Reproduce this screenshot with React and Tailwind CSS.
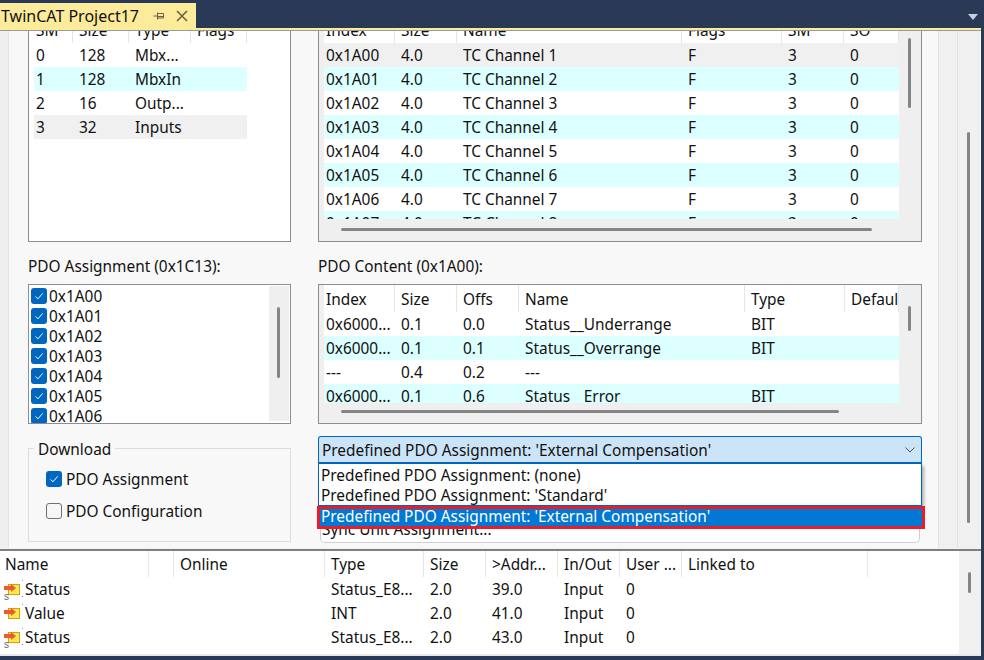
import React from "react";

const leftRows = [
  ["0", "128", "Mbx...", "", ""],
  ["1", "128", "MbxIn", "", "bg-[#dcffff]"],
  ["2", "16", "Outp...", "", ""],
  ["3", "32", "Inputs", "", "bg-[#f0f0f0]"],
];

const channelRows = [1, 2, 3, 4, 5, 6, 7, 8].map((n, i) => [
  "0x1A0" + (n - 1),
  "4.0",
  "TC Channel " + n,
  "F",
  "3",
  "0",
  i === 0 ? "bg-[#f0f0f0]" : i % 2 === 1 ? "bg-[#dcffff]" : "",
]);

const contentRows = [
  ["0x6000...", "0.1", "0.0", "Status__Underrange", "BIT", "", ""],
  ["0x6000...", "0.1", "0.1", "Status__Overrange", "BIT", "", "bg-[#dcffff]"],
  ["---", "0.4", "0.2", "---", "", "", ""],
  ["0x6000...", "0.1", "0.6", "Status__Error", "BIT", "", "bg-[#dcffff]"],
];

const varRows = [
  ["Status", "", "", "Status_E8...", "2.0", "39.0", "Input", "0", "", true],
  ["Value", "", "", "INT", "2.0", "41.0", "Input", "0", "", false],
  ["Status", "", "", "Status_E8...", "2.0", "43.0", "Input", "0", "", true],
];

const GRID_LEFT = "grid-cols-[39px_56px_62px_56px]";
const GRID_CHANNEL = "grid-cols-[71px_62px_225px_100px_62px_55px]";
const GRID_CONTENT = "grid-cols-[71px_62px_62px_226px_100px_54px]";
const GRID_VARS = "grid-cols-[149px_25px_151px_99px_62px_72px_62px_62px_186px]";

const HeaderCell = ({ label, first }) => (
  <div className={`h-full border-r border-[#e5e5e5] whitespace-nowrap overflow-hidden ${first ? "pl-[2px]" : "pl-[6px]"}`}>
    {label}
  </div>
);

const Row = ({ cells, grid, tint }) => (
  <div className={`grid h-[24px] items-start leading-[26px] ${grid} ${tint}`}>
    {cells.map((c, i) => (
      <div key={i} className={`h-[24px] whitespace-nowrap ${i === 0 ? "pl-[2px]" : "pl-[6px]"}`}>
        {c}
      </div>
    ))}
  </div>
);

const Tick = () => (
  <div className="w-[16px] h-[16px] rounded-[3px] bg-[#0067c0] flex items-center justify-center shrink-0">
    <svg width="10" height="10" viewBox="0 0 10 10" fill="none">
      <path d="M1.5 5.4 L4 7.8 L8.6 2.4" stroke="white" strokeWidth="1" />
    </svg>
  </div>
);

const VarIcon = ({ sub }) => (
  <svg width="22" height="24" viewBox="0 0 22 24" className="shrink-0">
    <rect x="7.5" y="7.5" width="11" height="10" fill="#ffe84a" stroke="#c9a21c" />
    <path d="M3 9 H10 V7 L15 11 L10 15 V13 H3 Z" fill="#f0582a" />
    <rect x="21" y="3" width="1" height="1" fill="#22d8e0" />
    {sub && <rect x="21" y="19" width="1" height="1" fill="#777777" />}
    {sub && (
      <text x="3" y="23" fontSize="10" fill="#666666" fontFamily="Liberation Sans, sans-serif">
        s
      </text>
    )}
  </svg>
);

export default function App() {
  return (
    <div className="w-[984px] h-[660px] overflow-hidden flex flex-col bg-[#2a3a56] text-[15.4px] text-[#111111] font-['Noto_Sans','Open_Sans',sans-serif]">
      {/* tab strip */}
      <div className="h-[28px] shrink-0 flex items-end justify-between">
        <div className="w-[196px] h-[25px] bg-[#fdeb9c] flex items-center pl-[1px]">
          <span className="w-[150px] text-[16px] whitespace-nowrap">TwinCAT Project17</span>
          <svg width="12" height="12" viewBox="0 0 12 12" className="ml-[2px]" fill="none" stroke="#6b6240">
            <path d="M0.5 6 H4 M4.5 2.5 V9.5 M4.5 3.5 H10.5 V8 H4.5 M4.5 6.5 H10.5" />
          </svg>
          <svg width="12" height="12" viewBox="0 0 12 12" className="ml-[11px]" fill="none" stroke="#6b6240" strokeWidth="1.6">
            <path d="M1 1 L11 11 M11 1 L1 11" />
          </svg>
        </div>
        <svg width="10" height="6" viewBox="0 0 10 6" className="mr-[6px] mb-[8px]">
          <path d="M0 0 H10 L5 6 Z" fill="#c8d0e0" />
        </svg>
      </div>

      <div className="w-[981px] shrink-0 h-[2px] bg-[#fdeb9c]" />
      <div className="w-[981px] shrink-0 h-px bg-[#9a9a9a]" />

      {/* upper pane */}
      <div className="w-[981px] h-[517px] shrink-0 flex bg-[#f8f8f8] overflow-hidden">
        <div className="w-[9px] shrink-0 bg-[#efefef] border-r border-[#e4e4e4]" />

        <div className="w-[930px] shrink-0 pl-[19px] border-r border-[#e0e0e0]">
          <div className="grid grid-cols-[263px_604px] gap-x-[27px]">
            {/* sync manager list */}
            <div className="h-[211px] border border-t-0 border-[#8a8d96] bg-white overflow-hidden pl-[5px]">
              <div className="w-[213px]">
                <div className={`grid h-[24px] -mt-[12px] leading-[23px] ${GRID_LEFT}`}>
                  {["SM", "Size", "Type", "Flags"].map((h, i) => (
                    <HeaderCell key={h} label={h} first={i === 0} />
                  ))}
                </div>
                {leftRows.map((r) => (
                  <Row key={r[0]} cells={r.slice(0, 4)} grid={GRID_LEFT} tint={r[4]} />
                ))}
              </div>
            </div>

            {/* pdo list */}
            <div className="h-[211px] border border-t-0 border-[#8a8d96] bg-[#efefef] overflow-hidden flex flex-col">
              <div className="flex flex-1 min-h-0">
                <div className="w-[575px] ml-[5px] overflow-hidden bg-white">
                  <div className={`grid h-[24px] -mt-[12px] leading-[23px] ${GRID_CHANNEL}`}>
                    {["Index", "Size", "Name", "Flags", "SM", "SO"].map((h, i) => (
                      <HeaderCell key={h} label={h} first={i === 0} />
                    ))}
                  </div>
                  {channelRows.map((r) => (
                    <Row key={r[0]} cells={r.slice(0, 6)} grid={GRID_CHANNEL} tint={r[6]} />
                  ))}
                </div>
                <div className="pl-[9px] pt-[7px]">
                  <div className="w-[3px] h-[70px] rounded-[2px] bg-[#858585]" />
                </div>
              </div>
              <div className="h-[22px] shrink-0 pl-[22px] pt-[9px]">
                <div className="w-[531px] h-[3px] rounded-[2px] bg-[#858585]" />
              </div>
            </div>

            <div className="h-[42px] leading-[49px] whitespace-nowrap">PDO Assignment (0x1C13):</div>
            <div className="h-[42px] leading-[49px] whitespace-nowrap">PDO Content (0x1A00):</div>

            {/* pdo assignment checklist */}
            <div className="h-[140px] border border-[#8a8d96] bg-white overflow-hidden flex">
              <div className="w-[240px] h-[138px] overflow-hidden pl-[2px] pt-[1px]">
                {["0x1A00", "0x1A01", "0x1A02", "0x1A03", "0x1A04", "0x1A05", "0x1A06"].map((x) => (
                  <div key={x} className="flex items-center gap-[2px] h-[20px]">
                    <Tick />
                    <span className="pt-[2px]">{x}</span>
                  </div>
                ))}
              </div>
              <div className="w-[20px] h-[135px] mt-[1px] bg-[#efefef] pl-[8px] pt-[21px]">
                <div className="w-[3px] h-[71px] rounded-[2px] bg-[#858585]" />
              </div>
            </div>

            {/* pdo content */}
            <div className="h-[140px] border border-[#8a8d96] bg-[#efefef] overflow-hidden flex flex-col">
              <div className="flex h-[118px] shrink-0">
                <div className="w-[575px] ml-[5px] overflow-hidden bg-white">
                  <div className={`grid h-[27px] leading-[29px] ${GRID_CONTENT}`}>
                    {["Index", "Size", "Offs", "Name", "Type", "Default"].map((h, i) => (
                      <HeaderCell key={h} label={h} first={i === 0} />
                    ))}
                  </div>
                  {contentRows.map((r, i) => (
                    <Row key={i} cells={r.slice(0, 6)} grid={GRID_CONTENT} tint={r[6]} />
                  ))}
                </div>
                <div className="pl-[9px] pt-[21px]">
                  <div className="w-[3px] h-[25px] rounded-[2px] bg-[#858585]" />
                </div>
              </div>
              <div className="h-[20px] pl-[22px] pt-[7px]">
                <div className="w-[498px] h-[3px] rounded-[2px] bg-[#858585]" />
              </div>
            </div>

            {/* download group */}
            <fieldset className="mt-[16px] h-[102px] border border-[#dcdcdc]">
              <legend className="ml-[5px] px-[4px] h-[16px] leading-[20px]">Download</legend>
              <div className="flex items-center gap-[4px] h-[32px] mt-[7px] ml-[17px]">
                <Tick />
                <span className="pt-[2px]">PDO Assignment</span>
              </div>
              <div className="flex items-center gap-[4px] h-[32px] ml-[17px]">
                <div className="w-[16px] h-[16px] rounded-[3px] border border-[#707070] bg-[#f6f6f6] shrink-0" />
                <span className="pt-[2px]">PDO Configuration</span>
              </div>
            </fieldset>

            {/* predefined combo */}
            <div className="relative mt-[12px]">
              <div className="h-[28px] bg-[#cce4f7] border border-b-2 border-[#0067c0] rounded-t-[3px] flex items-center justify-between pl-[3px] pr-[5px]">
                <span className="whitespace-nowrap pt-[2px]">Predefined PDO Assignment: 'External Compensation'</span>
                <svg width="12" height="8" viewBox="0 0 12 8" fill="none" stroke="#555555">
                  <path d="M1.5 1.5 L6 6 L10.5 1.5" />
                </svg>
              </div>
              <div className="absolute left-0 top-[28px] w-[604px]">
                <div className="absolute left-[2px] top-[60px] w-[600px] h-[19px] bg-white border border-t-0 border-[#cfcfcf] rounded-b-[5px] overflow-hidden pl-[1px] leading-[12px] whitespace-nowrap">
                  Sync Unit Assignment...
                </div>
                <div className="relative h-[42px] bg-white border border-t-0 border-[#0067c0] shadow-[2px_2px_3px_rgba(0,0,0,0.3)] pl-[2px] pt-[2px] leading-[20px] whitespace-nowrap">
                  <div>Predefined PDO Assignment: (none)</div>
                  <div>Predefined PDO Assignment: 'Standard'</div>
                </div>
                <div className="relative -ml-[1px] w-[608px] h-[23px] border-[3px] border-[#e81c2b] bg-[#0078d4] text-white pl-px leading-[15px] whitespace-nowrap">
                  Predefined PDO Assignment: 'External Compensation'
                </div>
              </div>
            </div>
          </div>
        </div>

        <div className="w-[19px] shrink-0 bg-[#f0f0f0] border-r border-[#e0e0e0]" />
        <div className="w-[22px] shrink-0 bg-[#f0f0f0] pl-[9px] pt-[101px]">
          <div className="w-[3px] h-[391px] rounded-[2px] bg-[#858585]" />
        </div>
      </div>

      {/* variables pane */}
      <div className="w-[981px] shrink-0 h-px bg-[#f0f0f0]" />
      <div className="w-[981px] shrink-0 h-[2px] bg-[#7f7f7f]" />
      <div className="w-[981px] h-[105px] shrink-0 flex bg-white border-b-2 border-[#e8e8e8]">
        <div className="w-[959px] overflow-hidden">
          <div className={`grid h-[26px] leading-[28px] ${GRID_VARS}`}>
            {["Name", "", "Online", "Type", "Size", ">Addr...", "In/Out", "User ...", "Linked to"].map((h, i) => (
              <div key={i} className={`h-full border-r border-[#e5e5e5] whitespace-nowrap overflow-hidden ${i === 0 ? "pl-[5px]" : "pl-[6px]"}`}>
                {h}
              </div>
            ))}
          </div>
          {varRows.map((r, i) => (
            <div key={i} className={`grid h-[24px] items-start leading-[26px] ${GRID_VARS}`}>
              <div className="flex items-start h-[24px] pl-[1px] gap-[2px]">
                <VarIcon sub={r[9]} />
                <span>{r[0]}</span>
              </div>
              {r.slice(1, 9).map((c, j) => (
                <div key={j} className="h-[24px] pl-[6px] whitespace-nowrap">
                  {c}
                </div>
              ))}
            </div>
          ))}
        </div>
        <div className="w-[22px] bg-[#f0f0f0] pl-[9px] pt-[21px]">
          <div className="w-[3px] h-[21px] rounded-[2px] bg-[#858585]" />
        </div>
      </div>
    </div>
  );
}
